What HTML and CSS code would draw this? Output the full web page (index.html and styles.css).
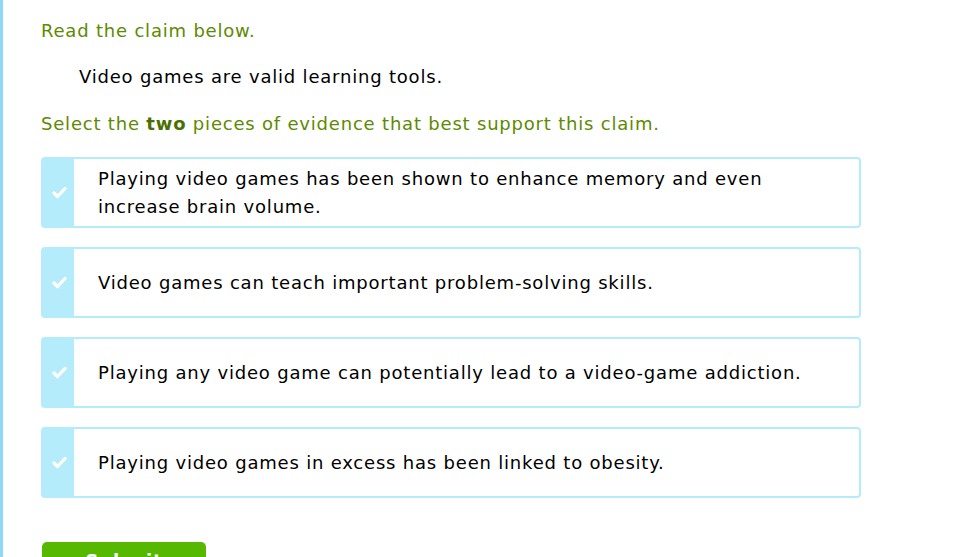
FILE: index.html
```html
<!DOCTYPE html>
<html>
<head>
<meta charset="utf-8">
<link rel="stylesheet" href="styles.css">
</head>
<body>
<div class="page">
  <div class="content">
    <p class="instr">Read the claim below.</p>
    <p class="claim">Video games are valid learning tools.</p>
    <p class="instr select">Select the <b>two</b> pieces of evidence that best support this claim.</p>
    <div class="options">
      <div class="option">
        <div class="strip"><svg width="15" height="13" viewBox="0 0 15 13"><path d="M2 7 L5.5 10.5 L13 2.5" fill="none" stroke="#fff" stroke-width="3.2" stroke-linecap="round" stroke-linejoin="round"/></svg></div>
        <div class="text">Playing video games has been shown to enhance memory and even increase brain volume.</div>
      </div>
      <div class="option">
        <div class="strip"><svg width="15" height="13" viewBox="0 0 15 13"><path d="M2 7 L5.5 10.5 L13 2.5" fill="none" stroke="#fff" stroke-width="3.2" stroke-linecap="round" stroke-linejoin="round"/></svg></div>
        <div class="text">Video games can teach important problem-solving skills.</div>
      </div>
      <div class="option">
        <div class="strip"><svg width="15" height="13" viewBox="0 0 15 13"><path d="M2 7 L5.5 10.5 L13 2.5" fill="none" stroke="#fff" stroke-width="3.2" stroke-linecap="round" stroke-linejoin="round"/></svg></div>
        <div class="text">Playing any video game can potentially lead to a video-game addiction.</div>
      </div>
      <div class="option">
        <div class="strip"><svg width="15" height="13" viewBox="0 0 15 13"><path d="M2 7 L5.5 10.5 L13 2.5" fill="none" stroke="#fff" stroke-width="3.2" stroke-linecap="round" stroke-linejoin="round"/></svg></div>
        <div class="text">Playing video games in excess has been linked to obesity.</div>
      </div>
    </div>
    <button class="submit">Submit</button>
  </div>
</div>
</body>
</html>
```
FILE: styles.css
```css
html, body {
  margin: 0;
  padding: 0;
  background: #fff;
  height: 100%;
  overflow: hidden;
}
.page {
  border-left: 3px solid #8fd8f8;
  min-height: 100%;
  box-sizing: border-box;
  font-family: "DejaVu Sans", Verdana, sans-serif;
  font-size: 18px;
  line-height: 28px;
  letter-spacing: 0.8px;
  color: #000;
}
.content {
  padding: 17px 0 0 38px;
}
p {
  margin: 0;
}
.instr {
  color: #5e8a00;
}
.instr b {
  color: #4a7000;
}
.claim {
  margin-top: 18px;
  padding-left: 38px;
}
.select {
  margin-top: 19px;
}
.options {
  margin-top: 19px;
  width: 820px;
  display: flex;
  flex-direction: column;
  gap: 19px;
}
.option {
  height: 71px;
  box-sizing: border-box;
  border: 2px solid #b4ecfc;
  border-radius: 4px;
  display: flex;
  align-items: stretch;
}
.strip {
  width: 31px;
  background: #b4ecfc;
  display: flex;
  align-items: center;
  justify-content: center;
  padding-left: 2px;
  box-sizing: border-box;
}
.text {
  flex: 1;
  display: flex;
  align-items: center;
  padding: 0 40px 0 24px;
}
.submit {
  margin-top: 44px;
  margin-left: 1px;
  width: 164px;
  height: 36px;
  border: none;
  border-radius: 5px;
  background: #56b800;
  color: #fff;
  font-family: "DejaVu Sans", Verdana, sans-serif;
  font-size: 18px;
  letter-spacing: 0.8px;
  font-weight: bold;
  padding: 0;
}
```
